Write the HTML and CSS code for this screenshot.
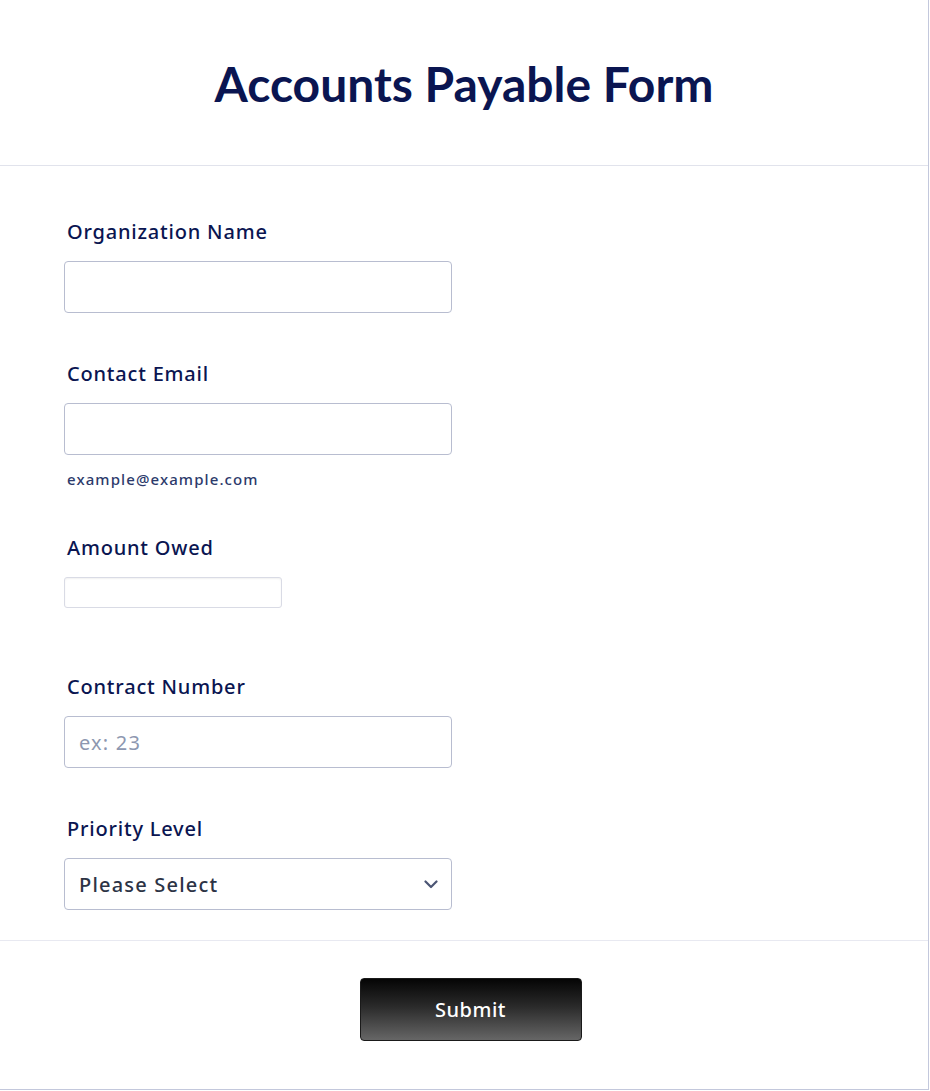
FILE: index.html
```html
<!DOCTYPE html>
<html lang="en">
<head>
<meta charset="utf-8">
<title>Accounts Payable Form</title>
<link rel="stylesheet" href="styles.css">
</head>
<body>
<div class="card">
  <header class="form-header">
    <h1 class="form-title">Accounts Payable Form</h1>
  </header>
  <form class="form-body">
    <div class="field field-org">
      <label class="field-label" for="org">Organization Name</label>
      <input class="text-input" id="org" type="text">
    </div>
    <div class="field field-email">
      <label class="field-label" for="email">Contact Email</label>
      <input class="text-input" id="email" type="email">
      <div class="sublabel">example@example.com</div>
    </div>
    <div class="field field-amount">
      <label class="field-label" for="amount">Amount Owed</label>
      <input class="small-input" id="amount" type="text">
    </div>
    <div class="field field-contract">
      <label class="field-label" for="contract">Contract Number</label>
      <input class="text-input" id="contract" type="text" placeholder="ex: 23">
    </div>
    <div class="field field-priority">
      <label class="field-label" for="priority">Priority Level</label>
      <div class="select-box">
        <span class="select-text">Please Select</span>
        <svg class="chevron" width="14" height="9" viewBox="0 0 14 9"><path d="M1.5 1.5 L7 7 L12.5 1.5" fill="none" stroke="#4b5574" stroke-width="2.2" stroke-linecap="round" stroke-linejoin="round"/></svg>
      </div>
    </div>
  </form>
  <footer class="form-footer">
    <button class="submit-btn" type="button">Submit</button>
  </footer>
</div>
</body>
</html>
```
FILE: styles.css
```css
html, body {
  margin: 0;
  padding: 0;
  background: #ffffff;
}
body {
  font-family: "Noto Sans", "Lato", sans-serif;
  color: #0a1551;
}
.card {
  width: 928px;
  height: 1089px;
  border-right: 1px solid #c3c8dc;
  border-bottom: 1px solid #c3c8dc;
  display: flex;
  flex-direction: column;
}
.form-header {
  height: 165px;
  border-bottom: 1px solid #e1e3ec;
  display: flex;
  align-items: flex-start;
  justify-content: center;
}
.form-title {
  margin: 56px 0 0;
  font-family: "Lato", "Noto Sans", sans-serif;
  font-size: 48px;
  line-height: 56px;
  font-weight: 700;
  color: #0a1551;
}
.form-body {
  padding: 0 0 0 64px;
  height: 775px;
  border-bottom: 1px solid #e8e9f1;
  box-sizing: border-box;
}
.field-label {
  display: block;
  margin-left: 3px;
  font-size: 20px;
  line-height: 24px;
  font-weight: 500;
  letter-spacing: 0.8px;
  color: #0a1551;
}
.field-org { padding-top: 54px; }
.field-email { padding-top: 49px; }
.field-amount { padding-top: 47px; }
.field-contract { padding-top: 67px; }
.field-priority { padding-top: 49px; }
.text-input {
  display: block;
  margin-top: 17px;
  width: 388px;
  height: 52px;
  box-sizing: border-box;
  border: 1px solid #b8bdd0;
  border-radius: 4px;
  padding: 0 14px;
  font-family: "Noto Sans", "Lato", sans-serif;
  font-size: 20px;
  letter-spacing: 1.2px;
  color: #2c3345;
  outline: none;
}
.text-input::placeholder {
  color: #8d97b0;
}
.sublabel {
  margin: 14px 0 0 3px;
  font-size: 15px;
  line-height: 20px;
  font-weight: 500;
  letter-spacing: 1.1px;
  color: #2c3a6b;
}
.small-input {
  display: block;
  margin-top: 17px;
  width: 218px;
  height: 31px;
  box-sizing: border-box;
  border: 1.5px solid #d9dbe5;
  border-radius: 3px;
  box-shadow: inset 0 1px 2px rgba(0,0,0,0.06);
  outline: none;
}
.select-box {
  margin-top: 17px;
  width: 388px;
  height: 52px;
  box-sizing: border-box;
  border: 1px solid #b8bdd0;
  border-radius: 4px;
  padding: 0 13px 0 14px;
  display: flex;
  align-items: center;
  justify-content: space-between;
}
.select-text {
  font-size: 20px;
  letter-spacing: 1.2px;
  color: #2c3345;
  font-weight: 500;
}
.form-footer {
  display: flex;
  justify-content: center;
  padding-top: 37px;
}
.submit-btn {
  width: 222px;
  height: 63px;
  border: 1px solid #1a1a1a;
  border-radius: 4px;
  background: linear-gradient(to bottom, #050505 0%, #2a2a2a 45%, #666666 100%);
  color: #ffffff;
  font-family: "Noto Sans", "Lato", sans-serif;
  font-size: 20px;
  font-weight: 500;
  letter-spacing: 0.5px;
  margin-left: 13px;
}
```
